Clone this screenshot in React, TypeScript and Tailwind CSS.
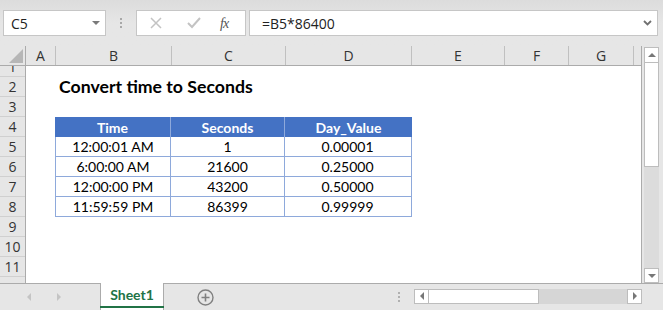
import React from "react";

const cols = [
  { key: "A", w: "w-[30px]" },
  { key: "B", w: "w-[116px]" },
  { key: "C", w: "w-[114px]" },
  { key: "D", w: "w-[126px]" },
  { key: "E", w: "w-[93px]" },
  { key: "F", w: "w-[64px]" },
  { key: "G", w: "w-[65px]" },
];

const rows = [
  ["12:00:01 AM", "1", "0.00001"],
  ["6:00:00 AM", "21600", "0.25000"],
  ["12:00:00 PM", "43200", "0.50000"],
  ["11:59:59 PM", "86399", "0.99999"],
];

const cellFont = "font-['Lato',sans-serif]";

function Tri({ dir, className }: { dir: "up" | "down" | "left" | "right"; className?: string }) {
  const pts = {
    up: "0,5 4,1 8,5",
    down: "0,1 4,5 8,1",
    left: "5,0 1,4 5,8",
    right: "1,0 5,4 1,8",
  }[dir];
  const size = dir === "up" || dir === "down" ? { w: 8, h: 6 } : { w: 6, h: 8 };
  return (
    <svg width={size.w} height={size.h} viewBox={`0 0 ${size.w} ${size.h}`} className={className}>
      <polygon points={pts} fill="currentColor" />
    </svg>
  );
}

export default function App() {
  return (
    <div className="w-[663px] h-[310px] overflow-hidden bg-[#e6e6e6] font-['Open_Sans',sans-serif] text-[#222]">
      {/* formula bar */}
      <div className="h-[46px] flex items-start pt-[10px] pl-[3px] bg-gradient-to-b from-[#dcdcdc] via-[#e6e6e6] to-[#e6e6e6]">
        <div className="w-[103px] h-[26px] bg-white border border-[#c6c6c6] flex items-center justify-between pl-[7px] pr-[5px]">
          <span className="text-[14px]">C5</span>
          <Tri dir="down" className="text-[#7a7a7a]" />
        </div>
        <div className="w-[30px] h-[26px] flex flex-col items-center justify-center gap-[2px]">
          <span className="w-[2px] h-[2px] bg-[#a8a8a8]" />
          <span className="w-[2px] h-[2px] bg-[#a8a8a8]" />
          <span className="w-[2px] h-[2px] bg-[#a8a8a8]" />
        </div>
        <div className="w-[110px] h-[26px] bg-white border border-[#c6c6c6] flex items-center">
          <svg width="12" height="12" viewBox="0 0 12 12" className="ml-[13px]">
            <path d="M1 1 L11 11 M11 1 L1 11" stroke="#c3c3c3" strokeWidth="1.5" />
          </svg>
          <svg width="14" height="12" viewBox="0 0 14 12" className="ml-[25px]">
            <path d="M1 6 L5 10 L13 1" stroke="#c3c3c3" strokeWidth="2" fill="none" />
          </svg>
          <span className="ml-[19px] text-[14px] italic font-['Liberation_Serif',serif] text-[#555] tracking-[-1px]">fx</span>
        </div>
        <div className="ml-[3px] w-[409px] h-[26px] bg-white border border-[#c6c6c6] flex items-center justify-between pl-[12px] pr-[5px]">
          <span className="text-[14px]">=B5*86400</span>
          <svg width="9" height="6" viewBox="0 0 9 6">
            <path d="M1 1 L4.5 4.5 L8 1" stroke="#707070" strokeWidth="1.8" fill="none" />
          </svg>
        </div>
      </div>

      {/* grid + vertical scroll */}
      <div className="flex h-[237px]">
        <div className="w-[642px] flex flex-col border-r border-[#ababab]">
          {/* column headers */}
          <div className="flex h-[20px] border-b border-[#ababab] text-[14px] text-[#333]">
            <div className="w-[26px] border-r border-[#ababab] relative">
              <svg width="14" height="14" viewBox="0 0 14 14" className="absolute right-[2px] bottom-[2px]">
                <polygon points="14,0 14,14 0,14" fill="#b6b6b6" />
              </svg>
            </div>
            {cols.map((c) => (
              <div key={c.key} className={`${c.w} shrink-0 border-r border-[#c0c0c0] flex items-center justify-center`}>
                {c.key}
              </div>
            ))}
            <div className="flex-1" />
          </div>
          {/* body */}
          <div className="flex flex-1 overflow-hidden">
            <div className="w-[26px] shrink-0 border-r border-[#ababab] flex flex-col text-[14px] text-[#333]">
              <div className="h-[11px] shrink-0 border-b border-[#d0d0d0] overflow-hidden">
                <div className="h-[20px] -mt-[9px] leading-[20px] text-center">1</div>
              </div>
              {[2, 3, 4, 5, 6, 7, 8, 9, 10, 11].map((n) => (
                <div key={n} className="h-[20px] shrink-0 border-b border-[#d0d0d0] flex items-center justify-center">
                  {n}
                </div>
              ))}
              <div className="h-[6px]" />
            </div>
            <div className={`flex-1 bg-white flex flex-col ${cellFont}`}>
              <div className="h-[11px]" />
              <div className="h-[20px] flex items-center pl-[33px] text-[17.7px] font-bold text-black">
                Convert time to Seconds
              </div>
              <div className="h-[20px]" />
              <div className="ml-[29px] w-[357px] text-[14px] text-black">
                <div className="flex h-[20px] bg-[#4472c4] text-white font-bold">
                  <div className="w-[116px] flex items-center justify-center border-r border-[#8ea9db]">Time</div>
                  <div className="w-[114px] flex items-center justify-center border-r border-[#8ea9db]">Seconds</div>
                  <div className="w-[127px] flex items-center justify-center">Day_Value</div>
                </div>
                {rows.map((r) => (
                  <div key={r[0]} className="flex h-[20px] border-l border-r border-b border-[#8ea9db]">
                    <div className="w-[115px] flex items-center justify-center border-r border-[#8ea9db]">{r[0]}</div>
                    <div className="w-[114px] flex items-center justify-center border-r border-[#8ea9db]">{r[1]}</div>
                    <div className="w-[125px] flex items-center justify-center">{r[2]}</div>
                  </div>
                ))}
              </div>
            </div>
          </div>
        </div>
        {/* vertical scrollbar */}
        <div className="ml-[2px] w-[15px] flex flex-col pt-[1px]">
          <div className="h-[16px] bg-white border border-[#bdbdbd] flex items-center justify-center text-[#777]">
            <Tri dir="up" />
          </div>
          <div className="h-[104px] bg-white border-x border-b border-[#bdbdbd]" />
          <div className="flex-1 bg-[#dcdcdc]" />
          <div className="h-[15px] bg-white border border-[#bdbdbd] flex items-center justify-center text-[#777]">
            <Tri dir="down" />
          </div>
        </div>
      </div>

      {/* sheet tabs */}
      <div className="h-[27px] flex">
        <div className="w-[100px] border-t border-[#ababab] flex items-center">
          <Tri dir="left" className="ml-[26px] text-[#c4c4c4]" />
          <Tri dir="right" className="ml-[24px] text-[#c4c4c4]" />
        </div>
        <div className="w-[64px] bg-white border-x border-[#ababab] flex flex-col">
          <div className="flex-1 flex items-center justify-center text-[14px] font-bold text-[#217346] font-['Lato',sans-serif]">
            Sheet1
          </div>
          <div className="h-[2px] bg-[#217346] mb-[2px] -mx-[1px]" />
        </div>
        <div className="flex-1 border-t border-[#ababab] flex items-center">
          <svg width="17" height="17" viewBox="0 0 17 17" className="ml-[33px]">
            <circle cx="8.5" cy="8.5" r="7.5" stroke="#808080" strokeWidth="1.4" fill="none" />
            <path d="M8.5 4.5 V12.5 M4.5 8.5 H12.5" stroke="#808080" strokeWidth="1.6" />
          </svg>
          <div className="ml-[184px] flex flex-col gap-[2px]">
            <span className="w-[2px] h-[2px] bg-[#b0b0b0]" />
            <span className="w-[2px] h-[2px] bg-[#b0b0b0]" />
            <span className="w-[2px] h-[2px] bg-[#b0b0b0]" />
          </div>
          <div className="ml-[14px] w-[228px] h-[15px] flex bg-[#d6d6d6] -mt-[2px]">
            <div className="w-[15px] bg-white border border-[#bdbdbd] flex items-center justify-center text-[#777]">
              <Tri dir="left" />
            </div>
            <div className="w-[110px] bg-white border-y border-r border-[#bdbdbd]" />
            <div className="flex-1" />
            <div className="w-[15px] bg-white border border-[#bdbdbd] flex items-center justify-center text-[#777]">
              <Tri dir="right" />
            </div>
          </div>
        </div>
      </div>
    </div>
  );
}
